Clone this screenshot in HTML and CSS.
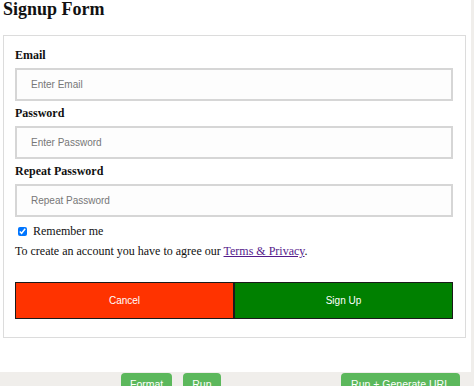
FILE: index.html
```html
<!DOCTYPE html>
<html lang="en">
<head>
  <meta charset="UTF-8">
  <meta name="viewport" content="width=device-width, initial-scale=1.0">
  <link rel="stylesheet" href="styles.css">
</head>
<body>

  <div class="page">
    <h2 class="title">Signup Form</h2>

    <form class="signup-card">
      <label for="email" class="field-label">Email</label>
      <input type="text" id="email" class="field-input" placeholder="Enter Email">

      <label for="psw" class="field-label">Password</label>
      <input type="password" id="psw" class="field-input" placeholder="Enter Password">

      <label for="psw-repeat" class="field-label">Repeat Password</label>
      <input type="password" id="psw-repeat" class="field-input" placeholder="Repeat Password">

      <label class="remember">
        <input type="checkbox" checked class="remember-box"> Remember me
      </label>

      <p class="terms">To create an account you have to agree our <a href="#" class="terms-link">Terms &amp; Privacy</a>.</p>

      <div class="button-row">
        <button type="button" class="btn cancel-btn">Cancel</button>
        <button type="button" class="btn signup-btn">Sign Up</button>
      </div>
    </form>
  </div>

  <div class="toolbar">
    <button class="tool-btn">Format</button>
    <button class="tool-btn">Run</button>
    <button class="tool-btn tool-btn-right">Run + Generate URL</button>
  </div>

</body>
</html>
```

FILE: styles.css
```css
* {
  box-sizing: border-box; /* borders count in the width */
}

body {
  margin: 0;
  height: 100vh;
  overflow: hidden;
  background-color: #f0eeeb; /* grey editor background */
  font-family: "Liberation Serif", "Times New Roman", serif;
  color: #111;
}

.page {
  width: 471px;
  height: 372px;
  background-color: #fff;
  padding: 0 3px;
}

.title {
  margin: 0 0 17px 0;
  font-size: 18px;
  line-height: 18px;
  font-weight: bold;
}

.signup-card {
  border: 1px solid #dcdcdc;
  padding: 12px 12px 18px 11px;
  width: 463px;
}

.field-label {
  display: block;
  font-size: 12px;
  line-height: 14px;
  font-weight: bold;
  margin-bottom: 6px;
}

.field-input {
  display: block;
  width: 100%;
  height: 33px;
  margin: 0 0 5px 0;
  padding: 0 14px;
  border: 2px solid #d6d6d6;
  background-color: #fdfdfd;
  font-family: "Liberation Sans", Arial, sans-serif;
  font-size: 10px;
  outline: none;
}

.field-input::placeholder {
  color: #777;
}

.remember {
  display: flex;
  align-items: center;
  margin-top: 7px;
  font-size: 12px;
  line-height: 14px;
}

.remember-box {
  width: 9px;
  height: 9px;
  margin: 0 6px 0 3px;
}

.terms {
  margin: 6px 0 0 0;
  font-size: 12px;
  line-height: 14px;
}

.terms-link {
  color: #551a8b;
}

.button-row {
  display: flex;
  margin-top: 24px;
}

.btn {
  flex: 1;
  height: 37px;
  border: 1px solid #1a1a1a;
  color: #fff;
  font-family: "Liberation Sans", Arial, sans-serif;
  font-size: 10px;
  cursor: pointer;
}

.cancel-btn {
  background-color: #ff3300;
}

.signup-btn {
  background-color: #008000;
}

.toolbar {
  display: flex;
  gap: 11px;
  padding: 1px 14px 0 121px;
}

.tool-btn {
  background-color: #5cb85c;
  color: #fff;
  border: none;
  border-radius: 4px;
  padding: 5px 9px 6px 9px;
  font-family: "Liberation Sans", Arial, sans-serif;
  font-size: 10.5px;
  line-height: 12px;
}

.tool-btn-right {
  margin-left: auto;
  padding: 5px 10px 6px 10px;
}
```
